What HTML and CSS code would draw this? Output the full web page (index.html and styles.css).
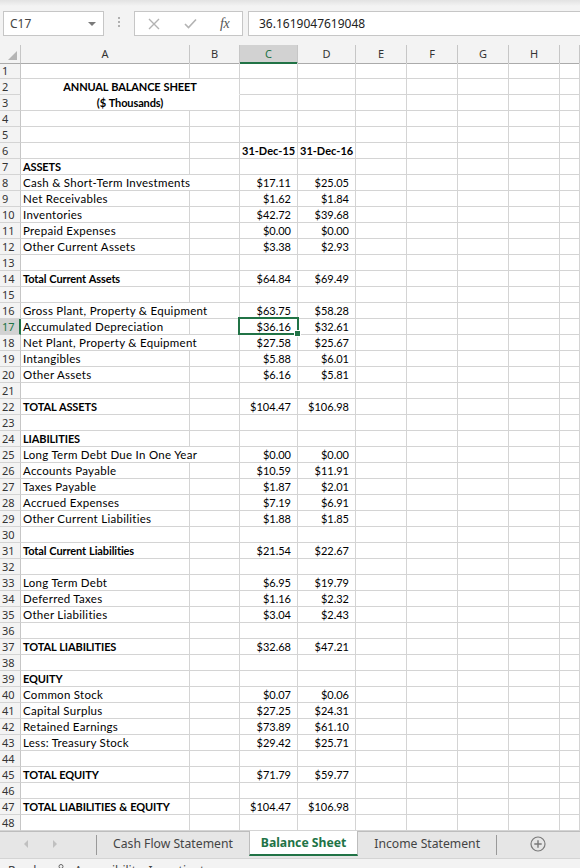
FILE: index.html
```html
<!DOCTYPE html>
<html>
<head>
<meta charset="utf-8">
<link rel="stylesheet" href="styles.css">
</head>
<body>
<div class="app">
  <div class="toolbar">
    <div class="namebox"><span>C17</span><span class="caret"></span></div>
    <div class="dots"><i></i><i></i><i></i></div>
    <div class="fxbox">
      <svg class="ico-x" width="12" height="12" viewBox="0 0 12 12"><path d="M1 1 L11 11 M11 1 L1 11" stroke="#b3b3b3" stroke-width="1.4" fill="none"/></svg>
      <svg class="ico-check" width="13" height="11" viewBox="0 0 13 11"><path d="M1 6 L4.5 9.5 L12 1.5" stroke="#b3b3b3" stroke-width="1.6" fill="none"/></svg>
      <span class="fx">fx</span>
    </div>
    <div class="formula">36.1619047619048</div>
  </div>

  <div class="sheet">
    <div class="row head"><span class="corner"><span class="tri"></span></span><span class="h">A</span><span class="h">B</span><span class="h sel">C</span><span class="h">D</span><span class="h">E</span><span class="h">F</span><span class="h">G</span><span class="h">H</span><span class="h"></span></div>
    <div class="row"><span class="n">1</span><span class="c"></span><span class="c"></span><span class="c"></span><span class="c"></span><span class="c"></span><span class="c"></span><span class="c"></span><span class="c"></span><span class="c"></span></div>
    <div class="row"><span class="n">2</span><span class="c span2 ctr b nobot">ANNUAL BALANCE SHEET</span><span class="c"></span><span class="c"></span><span class="c"></span><span class="c"></span><span class="c"></span><span class="c"></span><span class="c"></span></div>
    <div class="row"><span class="n">3</span><span class="c span2 ctr b">($ Thousands)</span><span class="c"></span><span class="c"></span><span class="c"></span><span class="c"></span><span class="c"></span><span class="c"></span><span class="c"></span></div>
    <div class="row"><span class="n">4</span><span class="c"></span><span class="c"></span><span class="c"></span><span class="c"></span><span class="c"></span><span class="c"></span><span class="c"></span><span class="c"></span><span class="c"></span></div>
    <div class="row"><span class="n">5</span><span class="c"></span><span class="c"></span><span class="c"></span><span class="c"></span><span class="c"></span><span class="c"></span><span class="c"></span><span class="c"></span><span class="c"></span></div>
    <div class="row"><span class="n">6</span><span class="c"></span><span class="c"></span><span class="c ctr b date">31-Dec-15</span><span class="c ctr b date">31-Dec-16</span><span class="c"></span><span class="c"></span><span class="c"></span><span class="c"></span><span class="c"></span></div>
    <div class="row"><span class="n">7</span><span class="c b">ASSETS</span><span class="c"></span><span class="c"></span><span class="c"></span><span class="c"></span><span class="c"></span><span class="c"></span><span class="c"></span><span class="c"></span></div>
    <div class="row"><span class="n">8</span><span class="c span2">Cash &amp; Short-Term Investments</span><span class="c num">$17.11</span><span class="c num">$25.05</span><span class="c"></span><span class="c"></span><span class="c"></span><span class="c"></span><span class="c"></span></div>
    <div class="row"><span class="n">9</span><span class="c">Net Receivables</span><span class="c"></span><span class="c num">$1.62</span><span class="c num">$1.84</span><span class="c"></span><span class="c"></span><span class="c"></span><span class="c"></span><span class="c"></span></div>
    <div class="row"><span class="n">10</span><span class="c">Inventories</span><span class="c"></span><span class="c num">$42.72</span><span class="c num">$39.68</span><span class="c"></span><span class="c"></span><span class="c"></span><span class="c"></span><span class="c"></span></div>
    <div class="row"><span class="n">11</span><span class="c">Prepaid Expenses</span><span class="c"></span><span class="c num">$0.00</span><span class="c num">$0.00</span><span class="c"></span><span class="c"></span><span class="c"></span><span class="c"></span><span class="c"></span></div>
    <div class="row"><span class="n">12</span><span class="c">Other Current Assets</span><span class="c"></span><span class="c num">$3.38</span><span class="c num">$2.93</span><span class="c"></span><span class="c"></span><span class="c"></span><span class="c"></span><span class="c"></span></div>
    <div class="row"><span class="n">13</span><span class="c"></span><span class="c"></span><span class="c"></span><span class="c"></span><span class="c"></span><span class="c"></span><span class="c"></span><span class="c"></span><span class="c"></span></div>
    <div class="row"><span class="n">14</span><span class="c b">Total Current Assets</span><span class="c"></span><span class="c num">$64.84</span><span class="c num">$69.49</span><span class="c"></span><span class="c"></span><span class="c"></span><span class="c"></span><span class="c"></span></div>
    <div class="row"><span class="n">15</span><span class="c"></span><span class="c"></span><span class="c"></span><span class="c"></span><span class="c"></span><span class="c"></span><span class="c"></span><span class="c"></span><span class="c"></span></div>
    <div class="row"><span class="n">16</span><span class="c span2">Gross Plant, Property &amp; Equipment</span><span class="c num">$63.75</span><span class="c num">$58.28</span><span class="c"></span><span class="c"></span><span class="c"></span><span class="c"></span><span class="c"></span></div>
    <div class="row"><span class="n nsel">17</span><span class="c">Accumulated Depreciation</span><span class="c"></span><span class="c num active">$36.16<span class="handle"></span></span><span class="c num">$32.61</span><span class="c"></span><span class="c"></span><span class="c"></span><span class="c"></span><span class="c"></span></div>
    <div class="row"><span class="n">18</span><span class="c span2">Net Plant, Property &amp; Equipment</span><span class="c num">$27.58</span><span class="c num">$25.67</span><span class="c"></span><span class="c"></span><span class="c"></span><span class="c"></span><span class="c"></span></div>
    <div class="row"><span class="n">19</span><span class="c">Intangibles</span><span class="c"></span><span class="c num">$5.88</span><span class="c num">$6.01</span><span class="c"></span><span class="c"></span><span class="c"></span><span class="c"></span><span class="c"></span></div>
    <div class="row"><span class="n">20</span><span class="c">Other Assets</span><span class="c"></span><span class="c num">$6.16</span><span class="c num">$5.81</span><span class="c"></span><span class="c"></span><span class="c"></span><span class="c"></span><span class="c"></span></div>
    <div class="row"><span class="n">21</span><span class="c"></span><span class="c"></span><span class="c"></span><span class="c"></span><span class="c"></span><span class="c"></span><span class="c"></span><span class="c"></span><span class="c"></span></div>
    <div class="row"><span class="n">22</span><span class="c b">TOTAL ASSETS</span><span class="c"></span><span class="c num">$104.47</span><span class="c num">$106.98</span><span class="c"></span><span class="c"></span><span class="c"></span><span class="c"></span><span class="c"></span></div>
    <div class="row"><span class="n">23</span><span class="c"></span><span class="c"></span><span class="c"></span><span class="c"></span><span class="c"></span><span class="c"></span><span class="c"></span><span class="c"></span><span class="c"></span></div>
    <div class="row"><span class="n">24</span><span class="c b">LIABILITIES</span><span class="c"></span><span class="c"></span><span class="c"></span><span class="c"></span><span class="c"></span><span class="c"></span><span class="c"></span><span class="c"></span></div>
    <div class="row"><span class="n">25</span><span class="c span2">Long Term Debt Due In One Year</span><span class="c num">$0.00</span><span class="c num">$0.00</span><span class="c"></span><span class="c"></span><span class="c"></span><span class="c"></span><span class="c"></span></div>
    <div class="row"><span class="n">26</span><span class="c">Accounts Payable</span><span class="c"></span><span class="c num">$10.59</span><span class="c num">$11.91</span><span class="c"></span><span class="c"></span><span class="c"></span><span class="c"></span><span class="c"></span></div>
    <div class="row"><span class="n">27</span><span class="c">Taxes Payable</span><span class="c"></span><span class="c num">$1.87</span><span class="c num">$2.01</span><span class="c"></span><span class="c"></span><span class="c"></span><span class="c"></span><span class="c"></span></div>
    <div class="row"><span class="n">28</span><span class="c">Accrued Expenses</span><span class="c"></span><span class="c num">$7.19</span><span class="c num">$6.91</span><span class="c"></span><span class="c"></span><span class="c"></span><span class="c"></span><span class="c"></span></div>
    <div class="row"><span class="n">29</span><span class="c">Other Current Liabilities</span><span class="c"></span><span class="c num">$1.88</span><span class="c num">$1.85</span><span class="c"></span><span class="c"></span><span class="c"></span><span class="c"></span><span class="c"></span></div>
    <div class="row"><span class="n">30</span><span class="c"></span><span class="c"></span><span class="c"></span><span class="c"></span><span class="c"></span><span class="c"></span><span class="c"></span><span class="c"></span><span class="c"></span></div>
    <div class="row"><span class="n">31</span><span class="c b">Total Current Liabilities</span><span class="c"></span><span class="c num">$21.54</span><span class="c num">$22.67</span><span class="c"></span><span class="c"></span><span class="c"></span><span class="c"></span><span class="c"></span></div>
    <div class="row"><span class="n">32</span><span class="c"></span><span class="c"></span><span class="c"></span><span class="c"></span><span class="c"></span><span class="c"></span><span class="c"></span><span class="c"></span><span class="c"></span></div>
    <div class="row"><span class="n">33</span><span class="c">Long Term Debt</span><span class="c"></span><span class="c num">$6.95</span><span class="c num">$19.79</span><span class="c"></span><span class="c"></span><span class="c"></span><span class="c"></span><span class="c"></span></div>
    <div class="row"><span class="n">34</span><span class="c">Deferred Taxes</span><span class="c"></span><span class="c num">$1.16</span><span class="c num">$2.32</span><span class="c"></span><span class="c"></span><span class="c"></span><span class="c"></span><span class="c"></span></div>
    <div class="row"><span class="n">35</span><span class="c">Other Liabilities</span><span class="c"></span><span class="c num">$3.04</span><span class="c num">$2.43</span><span class="c"></span><span class="c"></span><span class="c"></span><span class="c"></span><span class="c"></span></div>
    <div class="row"><span class="n">36</span><span class="c"></span><span class="c"></span><span class="c"></span><span class="c"></span><span class="c"></span><span class="c"></span><span class="c"></span><span class="c"></span><span class="c"></span></div>
    <div class="row"><span class="n">37</span><span class="c b">TOTAL LIABILITIES</span><span class="c"></span><span class="c num">$32.68</span><span class="c num">$47.21</span><span class="c"></span><span class="c"></span><span class="c"></span><span class="c"></span><span class="c"></span></div>
    <div class="row"><span class="n">38</span><span class="c"></span><span class="c"></span><span class="c"></span><span class="c"></span><span class="c"></span><span class="c"></span><span class="c"></span><span class="c"></span><span class="c"></span></div>
    <div class="row"><span class="n">39</span><span class="c b">EQUITY</span><span class="c"></span><span class="c"></span><span class="c"></span><span class="c"></span><span class="c"></span><span class="c"></span><span class="c"></span><span class="c"></span></div>
    <div class="row"><span class="n">40</span><span class="c">Common Stock</span><span class="c"></span><span class="c num">$0.07</span><span class="c num">$0.06</span><span class="c"></span><span class="c"></span><span class="c"></span><span class="c"></span><span class="c"></span></div>
    <div class="row"><span class="n">41</span><span class="c">Capital Surplus</span><span class="c"></span><span class="c num">$27.25</span><span class="c num">$24.31</span><span class="c"></span><span class="c"></span><span class="c"></span><span class="c"></span><span class="c"></span></div>
    <div class="row"><span class="n">42</span><span class="c">Retained Earnings</span><span class="c"></span><span class="c num">$73.89</span><span class="c num">$61.10</span><span class="c"></span><span class="c"></span><span class="c"></span><span class="c"></span><span class="c"></span></div>
    <div class="row"><span class="n">43</span><span class="c">Less: Treasury Stock</span><span class="c"></span><span class="c num">$29.42</span><span class="c num">$25.71</span><span class="c"></span><span class="c"></span><span class="c"></span><span class="c"></span><span class="c"></span></div>
    <div class="row"><span class="n">44</span><span class="c"></span><span class="c"></span><span class="c"></span><span class="c"></span><span class="c"></span><span class="c"></span><span class="c"></span><span class="c"></span><span class="c"></span></div>
    <div class="row"><span class="n">45</span><span class="c b">TOTAL EQUITY</span><span class="c"></span><span class="c num">$71.79</span><span class="c num">$59.77</span><span class="c"></span><span class="c"></span><span class="c"></span><span class="c"></span><span class="c"></span></div>
    <div class="row"><span class="n">46</span><span class="c"></span><span class="c"></span><span class="c"></span><span class="c"></span><span class="c"></span><span class="c"></span><span class="c"></span><span class="c"></span><span class="c"></span></div>
    <div class="row"><span class="n">47</span><span class="c b">TOTAL LIABILITIES &amp; EQUITY</span><span class="c"></span><span class="c num">$104.47</span><span class="c num">$106.98</span><span class="c"></span><span class="c"></span><span class="c"></span><span class="c"></span><span class="c"></span></div>
    <div class="row"><span class="n">48</span><span class="c"></span><span class="c"></span><span class="c"></span><span class="c"></span><span class="c"></span><span class="c"></span><span class="c"></span><span class="c"></span><span class="c"></span></div>
  </div>

  <div class="tabs">
    <div class="nav">
      <span class="arrow left"></span>
      <span class="arrow right"></span>
    </div>
    <span class="sep"></span>
    <span class="tab">Cash Flow Statement</span>
    <span class="tab active">Balance Sheet</span>
    <span class="tab">Income Statement</span>
    <span class="sep"></span>
    <svg class="plus" width="16" height="16" viewBox="0 0 16 16"><circle cx="8" cy="8" r="7" fill="none" stroke="#7a7a7a" stroke-width="1.2"/><path d="M8 4.3 V11.7 M4.3 8 H11.7" stroke="#7a7a7a" stroke-width="1.4"/></svg>
  </div>

  <div class="status">
    <span class="ready">Ready</span>
    <svg class="acc" width="12" height="10" viewBox="0 0 12 10"><circle cx="6" cy="2.5" r="2" fill="none" stroke="#666" stroke-width="1"/><path d="M1 6 H11 M6 5 V10" stroke="#666" stroke-width="1" fill="none"/></svg>
    <span class="acctext">Accessibility: Investigate</span>
  </div>
</div>
</body>
</html>
```

FILE: styles.css
```css
html, body {
  margin: 0;
  padding: 0;
}

body {
  width: 580px;
  height: 868px;
  overflow: hidden;
  background: #ffffff;
  font-family: "Noto Sans", "Open Sans", sans-serif;
}

.app {
  width: 580px;
  height: 868px;
  display: flex;
  flex-direction: column;
  overflow: hidden;
}

/* ---------- formula bar ---------- */
.toolbar {
  height: 45px;
  flex: none;
  box-sizing: border-box;
  padding-top: 11px;
  display: flex;
  align-items: flex-start;
  background: linear-gradient(#e2e2e2, #f3f3f3 6px, #f3f3f3);
}

.namebox {
  margin-left: 3px;
  width: 101px;
  height: 25px;
  box-sizing: border-box;
  border: 1px solid #c6c6c6;
  background: #fff;
  display: flex;
  align-items: center;
  justify-content: space-between;
  padding: 0 7px 0 6px;
  font-size: 12px;
  color: #444;
}

.caret {
  width: 0;
  height: 0;
  border-left: 4px solid transparent;
  border-right: 4px solid transparent;
  border-top: 4px solid #7a7a7a;
}

.dots {
  margin-left: 14px;
  margin-top: 6px;
  width: 2px;
  display: flex;
  flex-direction: column;
  gap: 2px;
}

.dots i {
  display: block;
  width: 2px;
  height: 2px;
  background: #b0b0b0;
}

.fxbox {
  margin-left: 14px;
  width: 109px;
  height: 25px;
  box-sizing: border-box;
  border: 1px solid #c6c6c6;
  background: #fff;
  display: flex;
  align-items: center;
  padding-left: 13px;
}

.ico-check {
  margin-left: 24px;
}

.fx {
  margin-left: 23px;
  font-family: "Liberation Serif", serif;
  font-style: italic;
  font-size: 14px;
  color: #555;
  letter-spacing: -0.5px;
}

.formula {
  margin-left: 5px;
  flex: 1;
  height: 25px;
  box-sizing: border-box;
  border: 1px solid #c6c6c6;
  border-right: none;
  background: #fff;
  padding-left: 10px;
  font-size: 12px;
  line-height: 23px;
  color: #222;
}

/* ---------- grid ---------- */
.sheet {
  flex: none;
}

.row {
  display: grid;
  grid-template-columns: 21px 169px 50px 58px 58px 51px 51px 51px 51px 1fr;
  height: 16px;
}

.row.head {
  height: 18px;
  background: #f3f3f3;
}

.corner {
  position: relative;
  box-sizing: border-box;
  border-right: 1px solid #c6c6c6;
  border-bottom: 1px solid #ababab;
}

.tri {
  position: absolute;
  right: 3px;
  bottom: 3px;
  width: 0;
  height: 0;
  border-left: 9px solid transparent;
  border-bottom: 9px solid #b5b5b5;
}

.h {
  box-sizing: border-box;
  border-right: 1px solid #c6c6c6;
  border-bottom: 1px solid #ababab;
  text-align: center;
  font-size: 11px;
  line-height: 17px;
  color: #333;
}

.h.sel {
  background: #d2d2d2;
  color: #217346;
  border-bottom: 2px solid #217346;
}

.n {
  box-sizing: border-box;
  background: #f3f3f3;
  border-right: 1px solid #c6c6c6;
  border-bottom: 1px solid #d4d4d4;
  font-size: 11px;
  line-height: 15px;
  padding-left: 2px;
  color: #333;
}

.n.nsel {
  background: #d2d2d2;
  color: #217346;
  border-right: 2px solid #217346;
}

.c {
  box-sizing: border-box;
  border-right: 1px solid #d4d4d4;
  border-bottom: 1px solid #d4d4d4;
  padding: 0 2px;
  font-family: Lato, "Liberation Sans", sans-serif;
  font-size: 11.5px;
  letter-spacing: 0.28px;
  line-height: 15px;
  color: #000;
  white-space: nowrap;
  overflow: hidden;
}

.c.span2 {
  grid-column: span 2;
}

.c.nobot {
  border-bottom-color: #fff;
}

.c.b {
  font-weight: 700;
  font-size: 11px;
  letter-spacing: -0.12px;
  word-spacing: 0.5px;
}

.c.date {
  letter-spacing: 0;
}

.c.ctr {
  text-align: center;
}

.c.num {
  text-align: right;
  padding-right: 6px;
  font-size: 11px;
  letter-spacing: 0;
}

.c.active {
  position: relative;
  overflow: visible;
}

.c.active::before {
  content: "";
  position: absolute;
  left: -2px;
  top: -2px;
  right: -2px;
  bottom: -1px;
  border: 2px solid #217346;
}

.handle {
  position: absolute;
  right: -4px;
  bottom: -3px;
  width: 5px;
  height: 5px;
  background: #217346;
  border: 1px solid #fff;
  z-index: 2;
}

/* ---------- sheet tabs ---------- */
.tabs {
  height: 27px;
  flex: none;
  box-sizing: border-box;
  border-top: 1px solid #bdbdbd;
  background: #e6e6e6;
  display: flex;
  align-items: flex-start;
}

.nav {
  width: 96px;
  height: 24px;
  display: flex;
  align-items: center;
  padding-left: 24px;
  box-sizing: border-box;
  gap: 25px;
}

.arrow {
  width: 0;
  height: 0;
  border-top: 4px solid transparent;
  border-bottom: 4px solid transparent;
}

.arrow.left {
  border-right: 4px solid #c0c0c0;
}

.arrow.right {
  border-left: 4px solid #c0c0c0;
}

.sep {
  width: 1px;
  height: 20px;
  margin-top: 3px;
  background: #999;
}

.tab {
  height: 24px;
  box-sizing: border-box;
  padding: 0 16px;
  font-size: 12.2px;
  line-height: 23px;
  color: #444;
}

.tab.active {
  background: #fff;
  color: #217346;
  font-weight: 700;
  border-bottom: 2px solid #217346;
  border-right: 1px solid #bdbdbd;
  border-left: 1px solid #bdbdbd;
  margin-top: -1px;
  height: 25px;
  padding: 0 11px;
  line-height: 24px;
}

.plus {
  margin-left: 33px;
  margin-top: 4px;
}

/* ---------- status bar ---------- */
.status {
  flex: 1;
  box-sizing: border-box;
  border-top: 1px solid #d4d4d4;
  background: #f3f3f3;
  display: flex;
  align-items: flex-start;
  padding-top: 3px;
  font-size: 12px;
  color: #444;
}

.ready {
  margin-left: 8px;
}

.acc {
  margin-left: 13px;
  margin-top: 2px;
}

.acctext {
  margin-left: 7px;
}
```
